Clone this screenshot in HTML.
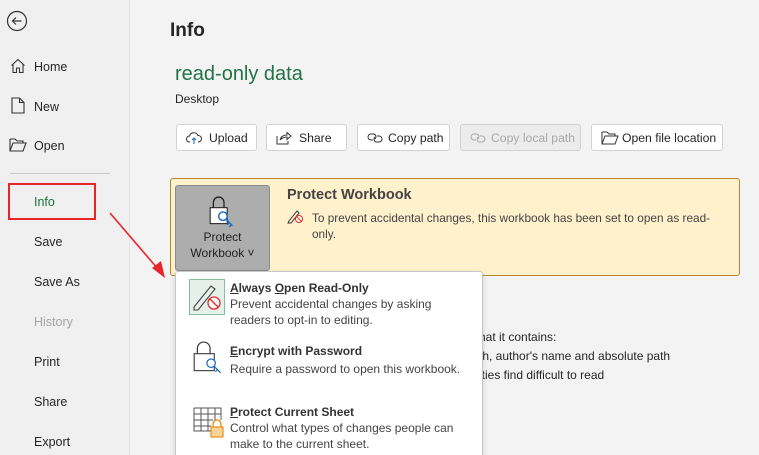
<!DOCTYPE html>
<html style="overflow:hidden"><head><style>
html,body{overflow:hidden}
body{margin:0;width:759px;height:455px;overflow:hidden;background:#f3f3f3;font-family:"Segoe UI","Liberation Sans",sans-serif;color:#262626;position:relative;font-size:12.5px}
.a{position:absolute;white-space:nowrap}
#side{position:absolute;left:0;top:0;width:129px;height:455px;background:#f0f0f0;border-right:1px solid #e6e6e6}
.nav{position:absolute;left:34px;font-size:12.5px;color:#262626}
.btn{position:absolute;top:124px;height:27px;background:#fff;border:1px solid #d2d2d2;border-radius:3px;font-size:12.2px;line-height:26px;box-sizing:border-box}
.btn span{position:absolute;left:32px}
.btn svg{position:absolute;left:9px;top:6px}
.it b{font-weight:bold;color:#333}
</style></head><body>
<div id="side">
<svg class="a" style="left:6px;top:10px" width="22" height="22" viewBox="0 0 22 22"><circle cx="11" cy="11" r="9.5" fill="none" stroke="#333" stroke-width="1.2"/><path d="M15.5 11H6.5M10 7.5L6.5 11L10 14.5" fill="none" stroke="#333" stroke-width="1.2"/></svg>
<svg class="a" style="left:10px;top:58px" width="16" height="16" viewBox="0 0 16 16"><path d="M1.5 7.5L8 1.5L14.5 7.5M3 6.5V14.5H6.5V10H9.5V14.5H13V6.5" fill="none" stroke="#333" stroke-width="1.1"/></svg>
<div class="nav" style="top:60px">Home</div>
<svg class="a" style="left:11px;top:97px" width="14" height="17" viewBox="0 0 14 17"><path d="M1 1H8.5L13 5.5V16H1Z M8.5 1V5.5H13" fill="none" stroke="#333" stroke-width="1.1"/></svg>
<div class="nav" style="top:100px">New</div>
<svg class="a" style="left:9px;top:138px" width="18" height="14" viewBox="0 0 18 14"><path d="M1 1H6L8 3H14V5M1 1V13H14L17 5H4L1 13" fill="none" stroke="#333" stroke-width="1.1"/></svg>
<div class="nav" style="top:139px">Open</div>
<div class="a" style="left:10px;top:173px;width:100px;height:1px;background:#c8c8c8"></div>
<div class="a" style="left:8px;top:183px;width:84px;height:33px;border:2px solid #e8262a"></div>
<div class="nav" style="top:195px;color:#1e6e3c">Info</div>
<div class="nav" style="top:235px">Save</div>
<div class="nav" style="top:275px">Save As</div>
<div class="nav" style="top:315px;color:#a6a6a6">History</div>
<div class="nav" style="top:355px">Print</div>
<div class="nav" style="top:395px">Share</div>
<div class="nav" style="top:435px">Export</div>
</div>
<div class="a" style="left:170px;top:20px;font-size:19px;font-weight:600;color:#262626">Info</div>
<div class="a" style="left:175px;top:63px;font-size:20px;color:#217346">read-only data</div>
<div class="a" style="left:175px;top:92px;font-size:12px">Desktop</div>
<div class="btn" style="left:176px;width:81px"><svg width="16" height="14" viewBox="0 0 16 14"><path d="M4 11H3.5A3 3 0 0 1 3.5 5A4.5 4.5 0 0 1 12 4.5A3 3 0 0 1 12.5 11H12" fill="none" stroke="#333"/><path d="M8 13V7M6 9L8 7L10 9" fill="none" stroke="#1a6fc4" stroke-width="1.1"/></svg><span>Upload</span></div>
<div class="btn" style="left:266px;width:81px"><svg width="16" height="14" viewBox="0 0 16 14"><path d="M1 5V13H12V10M4 9C5 5 8 4 11 4V1.5L15 5L11 8.5V6C8 6 6 7 4 9" fill="none" stroke="#333"/></svg><span>Share</span></div>
<div class="btn" style="left:357px;width:93px"><svg width="16" height="14" viewBox="0 0 16 14"><path d="M6 9H4A3 3 0 0 1 4 3H7A3 3 0 0 1 8 8M10 5H12A3 3 0 0 1 12 11H9A3 3 0 0 1 8 6" fill="none" stroke="#333"/></svg><span style="left:30px">Copy path</span></div>
<div class="btn" style="left:460px;width:121px;background:#ececec;color:#a8a8a8"><svg width="16" height="14" viewBox="0 0 16 14"><path d="M6 9H4A3 3 0 0 1 4 3H7A3 3 0 0 1 8 8M10 5H12A3 3 0 0 1 12 11H9A3 3 0 0 1 8 6" fill="none" stroke="#aaa"/></svg><span style="left:30px">Copy local path</span></div>
<div class="btn" style="left:591px;width:132px"><svg width="18" height="14" viewBox="0 0 18 14"><path d="M1 1H6L8 3H14V5M1 1V13H14L17 5H4L1 13" fill="none" stroke="#333"/></svg><span style="left:30px">Open file location</span></div>
<div class="a" style="left:170px;top:178px;width:568px;height:96px;background:#fff1cc;border:1px solid #b8862a;border-radius:3px"></div>
<div class="a" style="left:175px;top:185px;width:93px;height:84px;background:#adadad;border:1px solid #8c8c8c;border-radius:3px"></div>
<svg class="a" style="left:208px;top:196px" width="32" height="34" viewBox="0 0 30 32"><path d="M5 11V6A5 5 0 0 1 15 6V11" fill="none" stroke="#222" stroke-width="1.2"/><rect x="2" y="11" width="16" height="15" fill="#fff" stroke="#222"/><circle cx="14" cy="19" r="4" fill="#fff" stroke="#1a6fc4" stroke-width="1.4"/><path d="M17 22L23 28M20 25L18 27M22 27L20 29" stroke="#1a6fc4" stroke-width="1.4"/></svg>
<div class="a" style="left:175px;top:229px;width:95px;text-align:center;font-size:12px;line-height:16px;color:#222">Protect<br>Workbook ˅</div>
<div class="a" style="left:287px;top:187px;font-size:14.5px;font-weight:600;color:#444">Protect Workbook</div>
<svg class="a" style="left:287px;top:208px" width="18" height="16" viewBox="0 0 18 16"><path d="M2 13L10 3L12 5L4 15L1 15Z" fill="none" stroke="#333"/><circle cx="12" cy="11" r="3.5" fill="#fff" stroke="#e02b2b"/><path d="M9.5 8.5L14.5 13.5" stroke="#e02b2b"/></svg>
<div class="a" style="left:312px;top:210px;font-size:11.8px;line-height:16px;color:#444">To prevent accidental changes, this workbook has been set to open as read-<br>only.</div>
<div class="a" style="left:479px;top:328px;font-size:12px;line-height:19px;color:#262626">hat it contains:<br>th, author's name and absolute path<br>ities find difficult to read</div>
<div class="a" style="left:175px;top:271px;width:306px;height:190px;background:#fff;border:1px solid #c8c8c8;border-radius:3px;box-shadow:0 2px 6px rgba(0,0,0,.15)"></div>
<div class="a" style="left:189px;top:279px;width:34px;height:34px;background:#e6f0ea;border:1px solid #86bf9a"></div>
<svg class="a" style="left:191px;top:281px" width="32" height="32" viewBox="0 0 32 32"><path d="M3 26L20 5L24 8L7 29L3 29Z" fill="none" stroke="#444" stroke-width="1.1"/><circle cx="23" cy="22" r="6" fill="#fff" stroke="#e02b2b" stroke-width="1.3"/><path d="M19 18L27 26" stroke="#e02b2b" stroke-width="1.3"/></svg>
<div class="a it" style="left:230px;top:280px;font-size:12px;line-height:16px;color:#444"><b><u>A</u>lways <u>O</u>pen Read-Only</b><br>Prevent accidental changes by asking<br>readers to opt-in to editing.</div>
<svg class="a" style="left:193px;top:341px" width="32" height="36" viewBox="0 0 30 34"><path d="M4 12V7A6 6 0 0 1 16 7V12" fill="none" stroke="#333" stroke-width="1.1"/><rect x="1" y="12" width="19" height="16" fill="#fff" stroke="#333"/><circle cx="17" cy="21" r="4" fill="#fff" stroke="#1a6fc4" stroke-width="1.2"/><path d="M20 24L26 30M23 27L21 29" stroke="#1a6fc4" stroke-width="1.2"/></svg>
<div class="a it" style="left:230px;top:342px;font-size:12px;line-height:18px;color:#444"><b><u>E</u>ncrypt with Password</b><br>Require a password to open this workbook.</div>
<svg class="a" style="left:193px;top:407px" width="32" height="34" viewBox="0 0 32 34"><path d="M1 1H28V13M1 1V24H18M1 7H28M1 13H20M1 19H18M8 1V24M15 1V24M22 1V13" fill="none" stroke="#555" stroke-width="1"/><path d="M20 20V17A4 4 0 0 1 28 17V20" fill="none" stroke="#e67e00" stroke-width="1.2"/><rect x="18" y="20" width="12" height="10" fill="#f6d497" stroke="#e67e00"/></svg>
<div class="a it" style="left:230px;top:404px;font-size:12px;line-height:16px;color:#444"><b><u>P</u>rotect Current Sheet</b><br>Control what types of changes people can<br>make to the current sheet.</div>
<svg class="a" style="left:105px;top:205px" width="70" height="80" viewBox="0 0 70 80"><path d="M5 8L53 64" stroke="#e8262a" stroke-width="1.6"/><path d="M60 73L47 63L56 56Z" fill="#e8262a"/></svg>
</body></html>
